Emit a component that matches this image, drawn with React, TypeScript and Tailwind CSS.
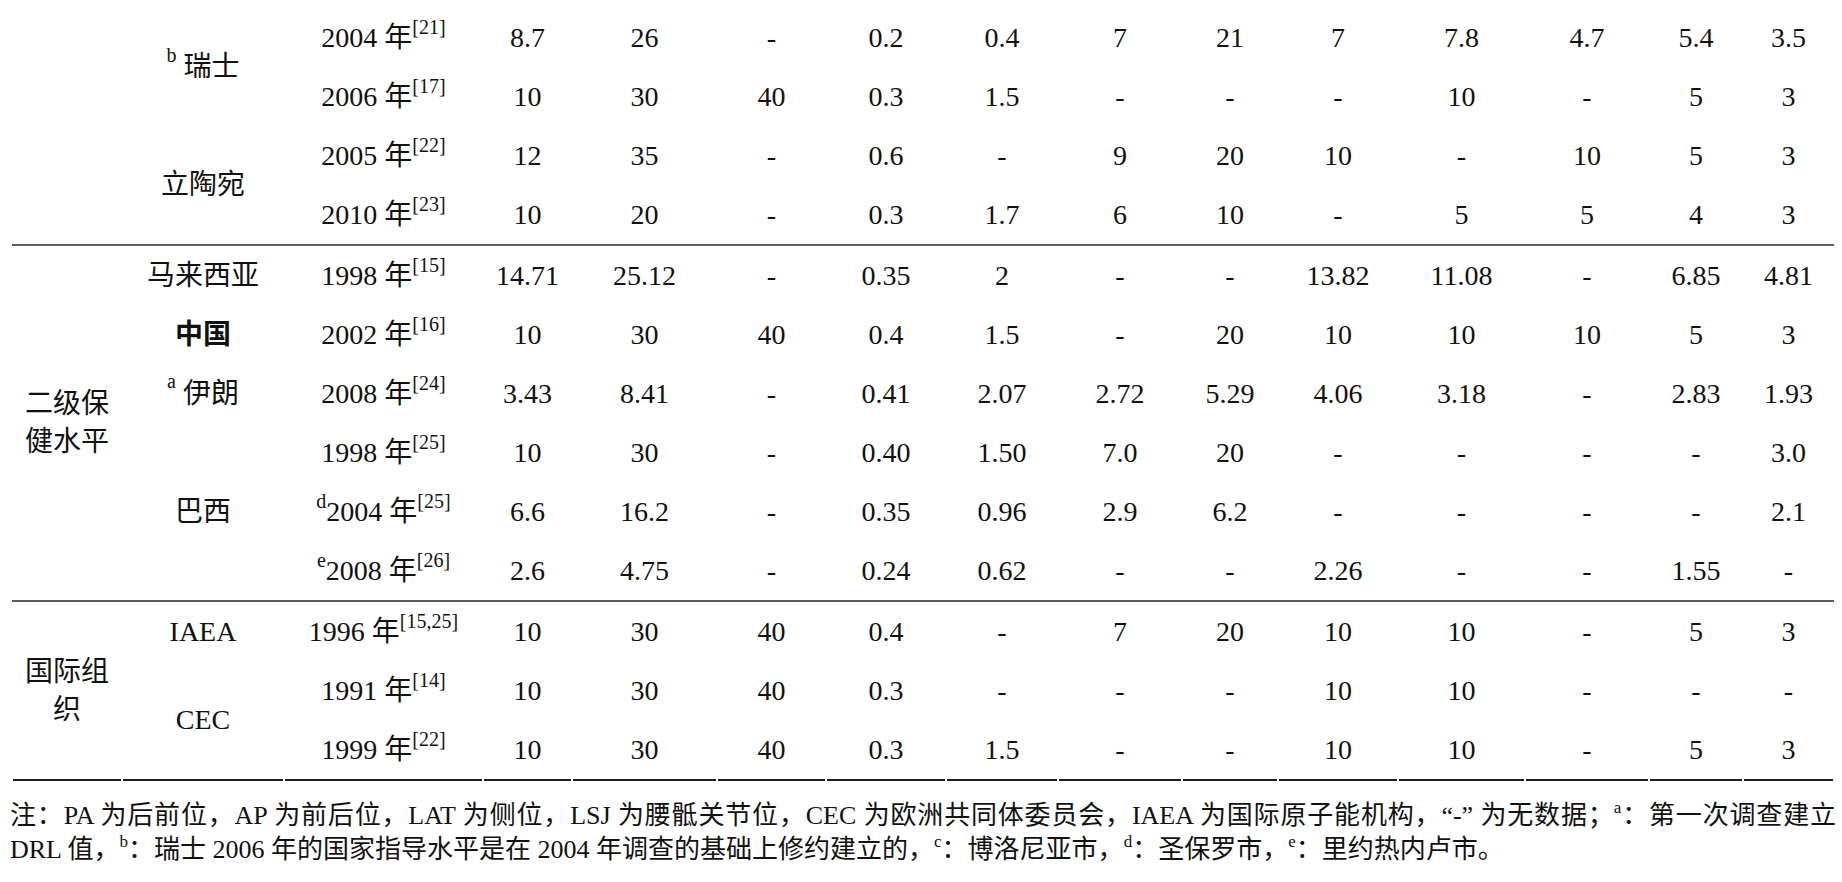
import type { ReactNode } from 'react';

interface YearCell {
  pre?: string;
  year: string;
  refs: string;
}

interface DataRow {
  year: YearCell;
  vals: string[];
}

interface Country {
  label: ReactNode;
  span: number;
}

interface Group {
  category?: string;
  countries: Country[];
  rows: DataRow[];
}

const FONT = '[font-family:"Liberation_Serif","Noto_Sans_CJK_SC",serif]';

// 数值列宽度（年份列起）
const valueCols =
  'grid grid-cols-[199px_89px_145px_109px_120px_112px_124px_96px_120px_127px_124px_94px_91px]';

const spanHeight: Record<number, string> = {
  1: 'h-[59px]',
  2: 'h-[118px]',
  3: 'h-[177px]',
};

const Sup = ({ children }: { children: ReactNode }) => (
  <sup className="text-[20px] -top-[0.62em]">{children}</sup>
);

const NoteSup = ({ children }: { children: ReactNode }) => (
  <sup className="text-[17px] -top-[0.62em]">{children}</sup>
);

const groups: Group[] = [
  {
    countries: [
      { label: <><Sup>b</Sup><span className="ml-[7px]">瑞士</span></>, span: 2 },
      { label: '立陶宛', span: 2 },
    ],
    rows: [
      { year: { year: '2004', refs: '21' }, vals: ['8.7', '26', '-', '0.2', '0.4', '7', '21', '7', '7.8', '4.7', '5.4', '3.5'] },
      { year: { year: '2006', refs: '17' }, vals: ['10', '30', '40', '0.3', '1.5', '-', '-', '-', '10', '-', '5', '3'] },
      { year: { year: '2005', refs: '22' }, vals: ['12', '35', '-', '0.6', '-', '9', '20', '10', '-', '10', '5', '3'] },
      { year: { year: '2010', refs: '23' }, vals: ['10', '20', '-', '0.3', '1.7', '6', '10', '-', '5', '5', '4', '3'] },
    ],
  },
  {
    category: '二级保健水平',
    countries: [
      { label: '马来西亚', span: 1 },
      { label: <span className="font-bold">中国</span>, span: 1 },
      { label: <><Sup>a</Sup><span className="ml-[7px]">伊朗</span></>, span: 1 },
      { label: '巴西', span: 3 },
    ],
    rows: [
      { year: { year: '1998', refs: '15' }, vals: ['14.71', '25.12', '-', '0.35', '2', '-', '-', '13.82', '11.08', '-', '6.85', '4.81'] },
      { year: { year: '2002', refs: '16' }, vals: ['10', '30', '40', '0.4', '1.5', '-', '20', '10', '10', '10', '5', '3'] },
      { year: { year: '2008', refs: '24' }, vals: ['3.43', '8.41', '-', '0.41', '2.07', '2.72', '5.29', '4.06', '3.18', '-', '2.83', '1.93'] },
      { year: { year: '1998', refs: '25' }, vals: ['10', '30', '-', '0.40', '1.50', '7.0', '20', '-', '-', '-', '-', '3.0'] },
      { year: { pre: 'd', year: '2004', refs: '25' }, vals: ['6.6', '16.2', '-', '0.35', '0.96', '2.9', '6.2', '-', '-', '-', '-', '2.1'] },
      { year: { pre: 'e', year: '2008', refs: '26' }, vals: ['2.6', '4.75', '-', '0.24', '0.62', '-', '-', '2.26', '-', '-', '1.55', '-'] },
    ],
  },
  {
    category: '国际组织',
    countries: [
      { label: 'IAEA', span: 1 },
      { label: 'CEC', span: 2 },
    ],
    rows: [
      { year: { year: '1996', refs: '15,25' }, vals: ['10', '30', '40', '0.4', '-', '7', '20', '10', '10', '-', '5', '3'] },
      { year: { year: '1991', refs: '14' }, vals: ['10', '30', '40', '0.3', '-', '-', '-', '10', '10', '-', '-', '-'] },
      { year: { year: '1999', refs: '22' }, vals: ['10', '30', '40', '0.3', '1.5', '-', '-', '10', '10', '-', '5', '3'] },
    ],
  },
];

const bottomSegments = [110, 162, 199, 89, 145, 109, 120, 112, 124, 96, 120, 127, 124, 94, 91];

function GroupBlock({ group, last }: { group: Group; last: boolean }) {
  return (
    <div className={`flex ${last ? '' : 'border-b-2 border-[#5c5c5c]'}`}>
      {/* 分类 */}
      <div className="w-[110px] flex items-center justify-center text-center leading-[38px] px-[10px]">
        {group.category}
      </div>

      {/* 国家 / 机构 */}
      <div className="w-[162px] flex flex-col">
        {group.countries.map((c, i) => (
          <div key={i} className={`${spanHeight[c.span]} flex items-center justify-center`}>
            {c.label}
          </div>
        ))}
      </div>

      {/* 年份与数据 */}
      <div className="flex flex-col">
        {group.rows.map((row, i) => (
          <div key={i} className={`${valueCols} h-[59px] items-center text-center`}>
            <div>
              {row.year.pre && <Sup>{row.year.pre}</Sup>}
              {row.year.year} 年<Sup>[{row.year.refs}]</Sup>
            </div>
            {row.vals.map((v, j) => (
              <div key={j}>{v}</div>
            ))}
          </div>
        ))}
      </div>
    </div>
  );
}

export default function App() {
  return (
    <div className={`min-h-screen bg-white text-[#111] ${FONT} pt-[8px]`}>
      <div className="ml-[12px] w-[1822px] text-[28px] leading-none">
        {groups.map((g, i) => (
          <GroupBlock key={i} group={g} last={i === groups.length - 1} />
        ))}

        <div className="flex">
          {bottomSegments.map((w, i) => (
            <div key={i} style={{ width: w }} className="px-[1px]">
              <div className="h-[2px] bg-[#1e1e1e]" />
            </div>
          ))}
        </div>
      </div>

      {/* 注释 */}
      <div className="ml-[10px] w-[1826px] mt-[18px] text-[26px] leading-[34px]">
        <p className="text-justify [text-align-last:justify]">
          注：PA 为后前位，AP 为前后位，LAT 为侧位，LSJ 为腰骶关节位，CEC 为欧洲共同体委员会，IAEA 为国际原子能机构，“-” 为无数据；
          <NoteSup>a</NoteSup>：第一次调查建立
        </p>
        <p>
          DRL 值，<NoteSup>b</NoteSup>：瑞士 2006 年的国家指导水平是在 2004 年调查的基础上修约建立的，
          <NoteSup>c</NoteSup>：博洛尼亚市，
          <NoteSup>d</NoteSup>：圣保罗市，
          <NoteSup>e</NoteSup>：里约热内卢市。
        </p>
      </div>
    </div>
  );
}
